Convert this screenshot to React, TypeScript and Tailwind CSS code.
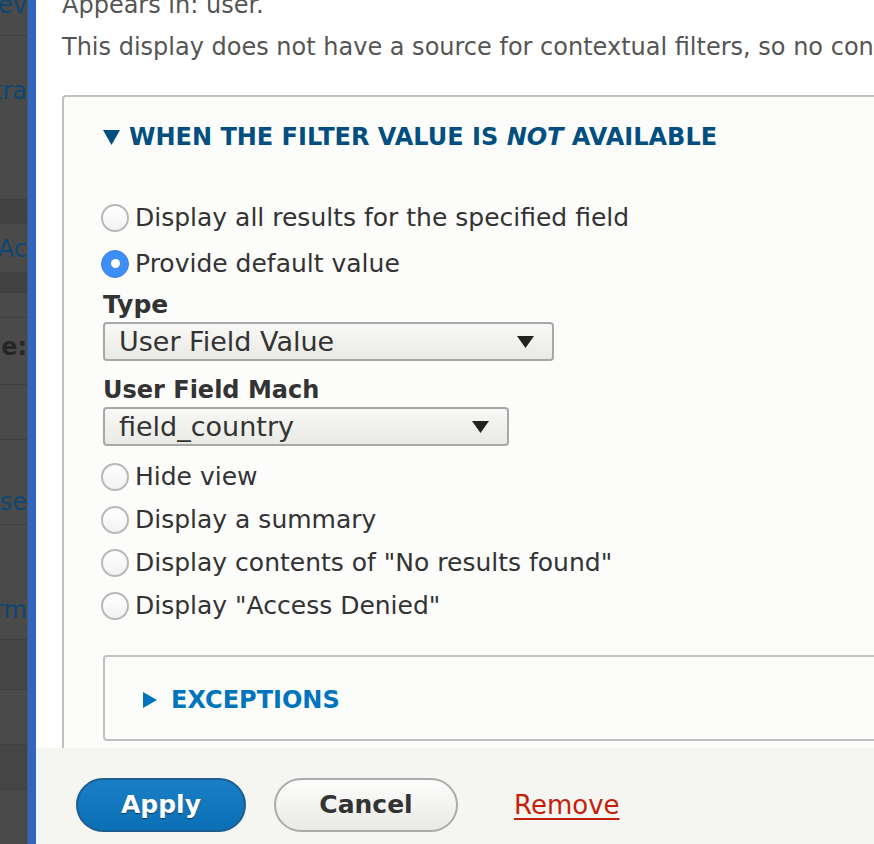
import React from 'react'

const font = { fontFamily: '"DejaVu Sans", "Liberation Sans", sans-serif' }

function Radio({ checked, label }: { checked?: boolean; label: string }) {
  return (
    <label className="flex items-center h-[43px] text-[25px] text-[#333]">
      <span
        className={
          checked
            ? 'flex items-center justify-center w-[28px] h-[28px] rounded-full bg-[#3f8ef5] border border-[#3a84e8] shrink-0'
            : 'w-[28px] h-[28px] rounded-full border-2 border-[#b8b8b8] bg-gradient-to-b from-[#ffffff] to-[#f2f2f2] shrink-0'
        }
      >
        {checked && <span className="w-[9px] h-[9px] rounded-full bg-white" />}
      </span>
      <span className="ml-[6px] whitespace-nowrap">{label}</span>
    </label>
  )
}

function Select({ value, width }: { value: string; width: string }) {
  return (
    <div
      className={`${width} mt-[2px] h-[39px] flex items-center justify-between pl-[14px] pr-[18px] rounded-[4px] border-2 border-[#a8a8a8] bg-gradient-to-b from-[#f8f8f6] to-[#e9e9e5] text-[27px] text-[#333]`}
    >
      <span className="whitespace-nowrap leading-none">{value}</span>
      <svg width="17" height="12" viewBox="0 0 17 12">
        <path d="M0 0 H17 L8.5 12 Z" fill="#222" />
      </svg>
    </div>
  )
}

function StripRow({ h, text, cls, bg, mt }: { h: string; text?: string; cls?: string; bg?: string; mt?: string }) {
  return (
    <div className={`${h} ${bg ?? ''} shrink-0 flex items-start justify-end overflow-hidden whitespace-nowrap border-b border-[#3f3f3f]`}>
      {text && <span className={`${mt ?? ''} leading-[30px] text-[24px] ${cls ?? 'text-[#0e4775]'}`}>{text}</span>}
    </div>
  )
}

export default function App() {
  return (
    <div className="w-[874px] h-[844px] flex overflow-hidden bg-white" style={font}>
      {/* dimmed page behind the dialog */}
      <div className="w-[28px] shrink-0 bg-[#4a4a4a] flex flex-col overflow-hidden border-r border-[#555]">
        <StripRow h="h-[36px]" text="Dev" mt="mt-[-10px]" />
        <StripRow h="h-[164px]" text="stra" mt="mt-[40px]" />
        <StripRow h="h-[24px]" bg="bg-[#424242]" />
        <StripRow h="h-[49px]" text="Ac" mt="mt-[10px]" />
        <StripRow h="h-[20px]" bg="bg-[#424242]" />
        <StripRow h="h-[25px]" />
        <StripRow h="h-[67px]" text="e:" cls="text-[#262626] font-bold" mt="mt-[14px]" />
        <StripRow h="h-[55px]" />
        <StripRow h="h-[85px]" text="use" mt="mt-[47px]" />
        <StripRow h="h-[115px]" text="orm" mt="mt-[70px]" />
        <StripRow h="h-[50px]" bg="bg-[#454545]" />
        <StripRow h="h-[55px]" />
        <StripRow h="h-[45px]" bg="bg-[#454545]" />
        <div className="flex-1" />
      </div>
      <div className="w-[8px] shrink-0 bg-[#2f66be]" />

      {/* dialog */}
      <div className="flex-1 flex flex-col min-w-0">
        <div className="h-[748px] shrink-0 overflow-hidden pl-[26px]">
          <p className="mt-[-10px] h-[30px] leading-[30px] text-[24px] text-[#555] whitespace-nowrap">Appears in: user.</p>
          <p className="mt-[12px] h-[30px] leading-[30px] text-[24px] text-[#555] whitespace-nowrap">
            This display does not have a source for contextual filters, so no contextual filter value will be available.
          </p>

          <div className="mt-[33px] w-[900px] border-2 border-[#c0c0c0] rounded-tl-[4px] bg-[#fcfcfa] pl-[39px] pt-[25px] pb-[20px]">
            <div className="flex items-center h-[30px] text-[24px] font-bold text-[#004f80] whitespace-nowrap">
              <svg width="17" height="15" viewBox="0 0 17 15" className="mr-[9px]">
                <path d="M0 0 H17 L8.5 15 Z" fill="#004f80" />
              </svg>
              WHEN THE FILTER VALUE IS&nbsp;<i>NOT</i>&nbsp;AVAILABLE
            </div>

            <div className="mt-[44px] -ml-[2px]">
              <Radio label="Display all results for the specified field" />
              <div className="h-[3px]" />
              <Radio checked label="Provide default value" />
            </div>

            <div className="mt-[5px]">
              <div className="h-[30px] leading-[30px] text-[25px] font-bold text-[#333]">Type</div>
              <Select value="User Field Value" width="w-[451px]" />
              <div className="mt-[14px] h-[30px] leading-[30px] text-[24px] font-bold text-[#333]">User Field Mach</div>
              <Select value="field_country" width="w-[406px]" />
            </div>

            <div className="mt-[9px] -ml-[2px]">
              <Radio label="Hide view" />
              <Radio label="Display a summary" />
              <Radio label='Display contents of "No results found"' />
              <Radio label='Display "Access Denied"' />
            </div>

            <div className="mt-[28px] w-[820px] h-[86px] border-2 border-[#c0c0c0] rounded-l-[4px] bg-[#fcfcfa] flex items-center pt-[4px] pl-[38px]">
              <svg width="14" height="16" viewBox="0 0 14 16" className="mr-[14px]">
                <path d="M0 0 L14 8 L0 16 Z" fill="#0074bd" />
              </svg>
              <span className="text-[24px] font-bold text-[#0074bd]">EXCEPTIONS</span>
            </div>
          </div>
        </div>

        {/* footer */}
        <div className="flex-1 bg-[#f5f5f2] flex items-start pt-[30px] pl-[40px] gap-[28px]">
          <button className="w-[170px] h-[54px] rounded-full border-2 border-[#1d5d91] bg-gradient-to-b from-[#1a7fc6] to-[#0a6fb5] text-white text-[25px] font-bold [text-shadow:0_1px_1px_rgba(0,0,0,0.5)]">
            Apply
          </button>
          <button className="w-[184px] h-[54px] rounded-full border-2 border-[#aaa] bg-gradient-to-b from-[#fdfdfd] to-[#e9e9e5] text-[#333] text-[25px] font-bold">
            Cancel
          </button>
          <a className="ml-[28px] h-[54px] flex items-center text-[26px] text-[#c41f0b] underline underline-offset-[4px]">Remove</a>
        </div>
      </div>
    </div>
  )
}
